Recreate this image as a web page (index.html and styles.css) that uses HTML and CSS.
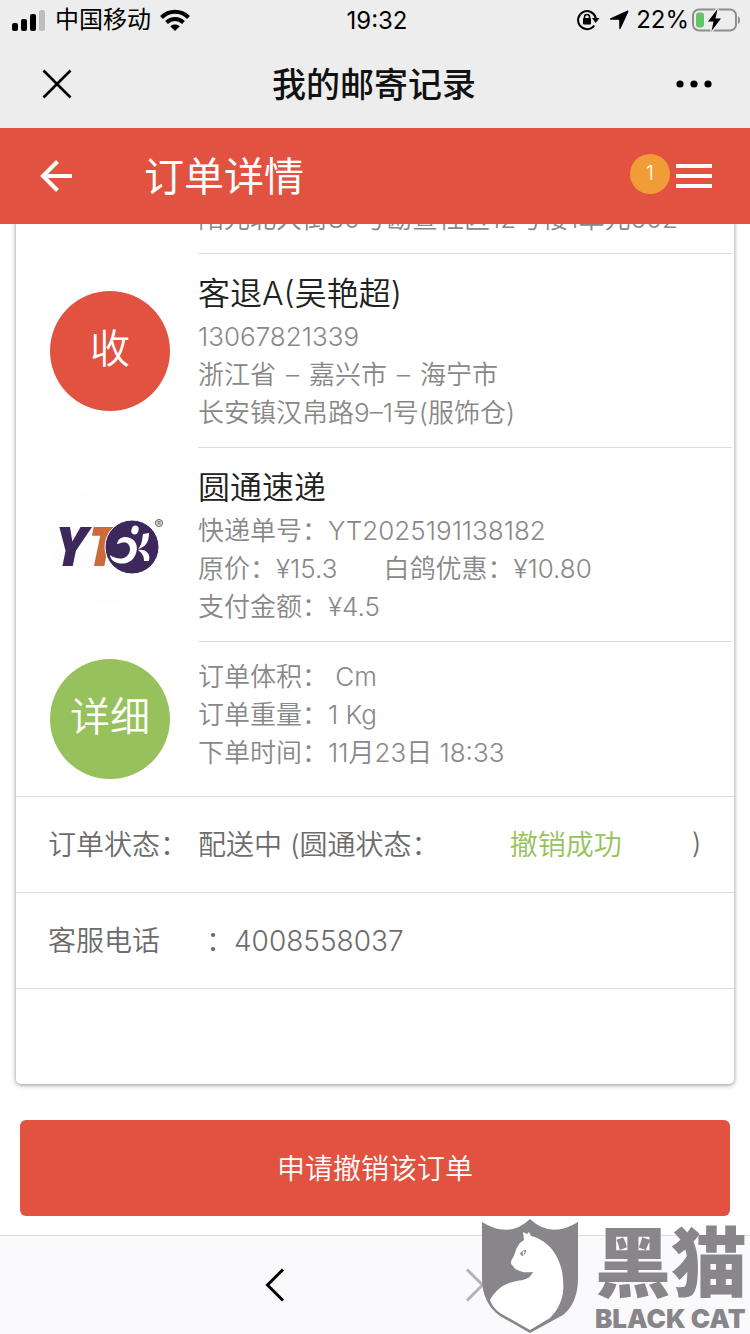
FILE: index.html
```html
<!DOCTYPE html>
<html lang="zh-CN">
<head>
<meta charset="utf-8">
<meta name="viewport" content="width=device-width, initial-scale=1">
<title>我的邮寄记录</title>
<link rel="stylesheet" href="styles.css">
</head>
<body>
<div class="statusbar">
  <div class="status-side">
    <svg width="34" height="22" viewBox="0 0 34 22" aria-hidden="true">
      <rect x="0" y="14" width="6" height="8" rx="2"/><rect x="9" y="10" width="6" height="12" rx="2"/><rect x="18" y="5" width="6" height="17" rx="2"/><rect x="27" y="1" width="6" height="21" rx="2" fill="#bdbdbd"/>
    </svg>
    <span class="carrier">中国移动</span>
    <svg width="30" height="22" viewBox="0 0 30 22" aria-hidden="true">
      <g fill="none" stroke="#000" stroke-width="4"><path d="M1.500 8.500C9 .8 21 .8 28.500 8.500"/><path d="M6.500 13.500C11.500 8.700 18.500 8.700 23.500 13.500"/></g>
      <path d="M15 22L10.200 17.200C13 14.900 17 14.900 19.800 17.200Z"/>
    </svg>
  </div>
  <span class="clock">19:32</span>
  <div class="status-side status-right">
    <svg width="23" height="22" viewBox="0 0 23 22" aria-hidden="true">
      <path d="M17.300 16.500A9 9 0 1 1 18.800 9" fill="none" stroke="#000" stroke-width="2"/>
      <path d="M15 9H22.500L18.700 14Z"/><rect x="6" y="9" width="8" height="6.500" rx="1"/><path d="M7.500 10V8A2.500 2.500 0 0 1 12.500 8V10" fill="none" stroke="#000" stroke-width="1.500"/>
    </svg>
    <svg class="arrow" width="20" height="20" viewBox="0 0 20 20" aria-hidden="true"><path d="M18 .7C19 .3 19.700 1 19.300 2L11.700 18.500C11.200 19.500 10.200 19.300 10.200 18.200V10.800Q10.200 9.800 9.200 9.800H1.800C.7 9.800 .5 8.800 1.500 8.300Z"/></svg>
    <span class="percent">22%</span>
    <svg width="50" height="24" viewBox="0 0 50 24" aria-hidden="true">
      <rect x="1" y="1.500" width="43" height="21" rx="6" fill="none" stroke="#8e8e8e" stroke-width="2"/>
      <path d="M46 8V16Q48 15 48 12T46 8Z" fill="#8e8e8e"/><rect x="4" y="4.500" width="8" height="15" rx="3" fill="#62c466"/>
      <path d="M25.500 1L16 13.500H21.500L19.500 23L29 10.500H23.500Z" stroke="#ededed" stroke-width="3" paint-order="stroke"/>
    </svg>
  </div>
</div>
<header class="webbar">
  <button class="bare" aria-label="关闭"><svg width="30" height="30" viewBox="0 0 30 30"><path d="M1.500 1.500L28.500 28.500M28.500 1.500L1.500 28.500" stroke="#000" stroke-width="2.600" fill="none"/></svg></button>
  <span class="webtitle">我的邮寄记录</span>
  <button class="bare" aria-label="更多"><svg width="36" height="8" viewBox="0 0 36 8"><circle cx="4" cy="4" r="3.600"/><circle cx="18" cy="4" r="3.600"/><circle cx="32" cy="4" r="3.600"/></svg></button>
</header>
<div class="appbar">
  <button class="bare" aria-label="返回"><svg width="32" height="32" viewBox="0 0 32 32"><path d="M32 16H3M17.500 1.500L3 16L17.500 30.500" stroke="#fff" stroke-width="4" fill="none"/></svg></button>
  <h1>订单详情</h1>
  <span class="count">1</span>
  <button class="bare" aria-label="菜单"><svg width="36" height="24" viewBox="0 0 36 24" fill="#fff"><path d="M0 0H36V4H0ZM0 10H36V14H0ZM0 20H36V24H0Z"/></svg></button>
</div>
<main>
  <section class="card">
    <div class="item sender"><div class="info"><p>阳光北大街80号勘查社区12号楼1单元602</p></div></div>
    <div class="item">
      <div class="avatar red">收</div>
      <div class="info"><h2>客退A(吴艳超)</h2><p>13067821339</p><p class="region"><span>浙江省</span><span>–</span><span>嘉兴市</span><span>–</span><span>海宁市</span></p><p>长安镇汉帛路9–1号(服饰仓)</p></div>
    </div>
    <div class="item">
      <svg class="logo" width="120" height="120" viewBox="0 0 120 120" role="img" aria-label="YTO">
        <circle cx="60" cy="60" r="60" fill="#fefefe"/>
        <text x="5" y="81" class="yto" fill="#3d285c">Y<tspan fill="#cd6a3b">T</tspan></text>
        <circle cx="82" cy="62" r="27" fill="#3d285c" stroke="#fefefe" stroke-width="1"/>
        <ellipse cx="85" cy="45" rx="3.500" ry="4.500" fill="#fff" transform="rotate(20 85 45)"/>
        <path d="M67 59C68 52 76 50 82 54C89 58 88 69 82 75C74 82 60 78 60 70C65 74 73 75 77 71C81 67 81 61 77 58C73 56 70 59 67 59Z" fill="#fff"/>
        <path d="M93 49L99 48C99 58 95 62 88 64C92 60 92 55 93 49ZM88 65C96 64 101 69 99 76L94 76C94 71 92 68 88 65Z" fill="#fff"/>
        <circle cx="109" cy="38" r="3.500" fill="none" stroke="#555" stroke-width="1"/><text x="109" y="40" text-anchor="middle" class="reg">R</text>
      </svg>
      <div class="info"><h2>圆通速递</h2><p>快递单号：YT2025191138182</p><p class="prices"><span>原价：¥15.3</span><span>白鸽优惠：¥10.80</span></p><p>支付金额：¥4.5</p></div>
    </div>
    <div class="item last">
      <div class="avatar green">详细</div>
      <div class="info"><p>订单体积：&nbsp;Cm</p><p>订单重量：1 Kg</p><p>下单时间：11月23日 18:33</p></div>
    </div>
    <div class="row"><span class="label">订单状态：</span><span>配送中 (圆通状态：</span><span class="state">撤销成功</span><span>)</span></div>
    <div class="row"><span class="label phone">客服电话</span><span>：4008558037</span></div>
    <div class="row"></div>
  </section>
  <button class="cancel">申请撤销该订单</button>
</main>
<nav class="toolbar">
  <button class="bare" aria-label="后退"><svg width="20" height="34" viewBox="0 0 20 34"><path d="M18 1.500L2.500 17L18 32.500" stroke="#000" stroke-width="3" fill="none"/></svg></button>
  <button class="bare" aria-label="前进" disabled><svg width="20" height="34" viewBox="0 0 20 34"><path d="M2 1.500L17.500 17L2 32.500" stroke="#b4b4b6" stroke-width="3" fill="none"/></svg></button>
</nav>
<div class="watermark">
  <svg width="98" height="115" viewBox="0 0 98 115" aria-hidden="true">
    <path d="M1 3Q28 20 49 0Q70 20 97 3V59Q97 84 82 96L49 114L19 97Q1 84 1 59Z" fill="#88868a"/>
    <path d="M42 13L46 15L48 13L50 17C58 19 64 23 69 28C76 36 79 44 81 52Q83 63 82 74C80 84 76 92 69 99L49 111L19 94Q11 88 9 81C11 77 14 73 19 69C24 65 30 63 36 62C43 61 49 60 52 53C47 53 43 54 39 52C35 51 33 49 32 47C29 45 30 42 31 40C34 37 34 31 37 27Q39 23 43 21Z" fill="#fff"/>
    <path d="M39 35Q41 31 45 31Q45 36 41 37Z" fill="#88868a"/><ellipse cx="42.500" cy="34" rx="1" ry="2" fill="#fff"/>
  </svg>
  <div class="brand"><span class="brand-cn">黑猫</span><span class="brand-en">BLACK CAT</span></div>
</div>
</body>
</html>
```
FILE: styles.css
```css
* { box-sizing: border-box; }
body {
  margin: 0;
  min-height: 100vh;
  position: relative;
  display: flex;
  flex-direction: column;
  background: #fff;
  color: #6c6c6c;
  font-family: Inter, "Noto Sans CJK SC", sans-serif;
  font-weight: 350;
  overflow-x: hidden;
}
h1, h2, p { margin: 0; }
svg { display: block; flex: none; }
.bare { border: 0; padding: 0; background: none; display: flex; }

.statusbar {
  display: flex;
  align-items: center;
  height: 40px;
  padding: 0 8px 0 12px;
  background: #ededed;
  color: #000;
  font-size: 24px;
  font-weight: 400;
}
.status-side { flex: 1; display: flex; align-items: center; gap: 9px; }
.status-right { justify-content: flex-end; gap: 3px; }
.arrow { margin: 0 4px 0 6px; }
.carrier, .percent { line-height: 40px; }

.webbar {
  display: flex;
  align-items: center;
  justify-content: space-between;
  height: 88px;
  padding: 0 38px 0 42px;
  background: #ededed;
}
.webtitle { padding-bottom: 4px; color: #111; font-size: 34px; font-weight: 500; }

.appbar {
  display: flex;
  align-items: center;
  height: 96px;
  padding: 0 38px 0 40px;
  background: #e15241;
  color: #fff;
}
.appbar h1 { flex: 1; margin-left: 72px; padding-bottom: 4px; font-size: 40px; font-weight: 400; }
.count {
  width: 40px;
  height: 40px;
  margin: 0 6px 4px 0;
  border-radius: 50%;
  background: #f09d38;
  font-size: 20px;
  line-height: 38px;
  text-align: center;
}

main { flex: 1; overflow: hidden; }
.card {
  margin: -24px 16px 0;
  border-radius: 5px;
  box-shadow: 0 1px 5px rgba(0, 0, 0, 0.45);
}
.item {
  display: flex;
  align-items: center;
  gap: 28px;
  padding: 0 2px 0 34px;
}
.info {
  flex: 1;
  padding: 16px 0 15px;
  border-bottom: 1px solid #ddd;
  color: #888;
  font-size: 26px;
  line-height: 38px;
  white-space: nowrap;
}
.info h2 { color: #212121; font-size: 32px; font-weight: 350; line-height: 48px; }
.sender { padding-left: 182px; }
.sender .info { padding-top: 0; }
.last .info { padding-bottom: 24px; border-bottom: 0; }
.region { display: flex; gap: 10px; }
.prices { display: flex; gap: 46px; }
.avatar, .logo { flex: none; width: 120px; height: 120px; }
.avatar {
  border-radius: 50%;
  color: #fff;
  font-size: 40px;
  line-height: 116px;
  text-align: center;
}
.red { background: #e15241; }
.green { background: #97c15c; }
.yto { font: italic 800 54px "Open Sans", sans-serif; }
.reg { font: 700 5px "Liberation Sans", sans-serif; fill: #555; }
.row {
  display: flex;
  align-items: center;
  height: 96px;
  padding: 0 32px 4px;
  border-top: 1px solid #ddd;
  font-size: 28px;
  white-space: nowrap;
}
.label { width: 150px; }
.phone { width: 158px; }
.state { margin: 0 70px; color: #97c15c; }
.cancel {
  display: block;
  width: calc(100% - 40px);
  height: 96px;
  margin: 36px 20px 19px;
  padding: 0 0 2px;
  border: 0;
  border-radius: 6px;
  background: #e15241;
  color: #fff;
  font: inherit;
  font-size: 28px;
}

.toolbar {
  display: flex;
  align-items: center;
  justify-content: center;
  gap: 180px;
  height: 99px;
  border-top: 1px solid #dedee0;
  background: #fafafc;
}
.watermark {
  position: absolute;
  right: 0;
  bottom: 0;
  display: flex;
  gap: 16px;
  padding-right: 3px;
  color: #88868a;
}
.brand { display: flex; flex-direction: column; }
.brand-cn { font-size: 76px; font-weight: 900; line-height: 88px; }
.brand-en { font-size: 26px; font-weight: 900; line-height: 24px; }
```
